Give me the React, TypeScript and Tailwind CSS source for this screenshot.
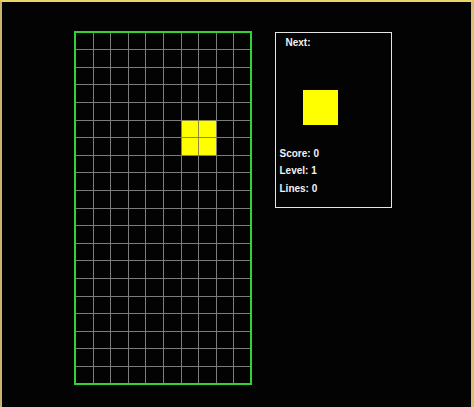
const COLS = 10;
const ROWS = 20;

// the falling O piece: rows 5-6, cols 6-7
const filled = new Set(["5-6", "5-7", "6-6", "6-7"]);

function Board() {
  const cells = [];
  for (let r = 0; r < ROWS; r++) {
    for (let c = 0; c < COLS; c++) {
      const on = filled.has(`${r}-${c}`);
      cells.push(
        <div
          key={`${r}-${c}`}
          className={
            on
              ? "border-l border-t border-[#8c8a3a] bg-[#ffff00]"
              : "border-l border-t border-[#7c7c7c]"
          }
        />
      );
    }
  }
  return (
    <div className="grid h-[352px] w-[176px] shrink-0 grid-cols-10 grid-rows-20 outline-[2.5px] -outline-offset-[1px] outline-[#33d233] outline-solid">
      {cells}
    </div>
  );
}

function SidePanel() {
  return (
    <div className="flex h-[176px] w-[117px] flex-col border-[1.5px] border-[#e4e4e4] font-['Liberation_Sans',Arial,sans-serif] text-[10px] font-bold text-[#f2f2f2]">
      <p className="pl-[9.5px] pt-[3.5px] leading-[12px]">Next:</p>
      <div className="ml-[27px] mt-[41.5px] h-[35.2px] w-[35.2px] bg-[#ffff00]" />
      <div className="mt-[19.5px] pl-[3.5px] leading-[17.4px]">
        <p>Score: 0</p>
        <p>Level: 1</p>
        <p>Lines: 0</p>
      </div>
    </div>
  );
}

export default function App() {
  return (
    <div className="h-[407px] w-[474px] overflow-hidden border-l-2 border-r-[3px] border-t-2 border-l-[#cbb56e] border-r-[#d8c070] border-t-[#ecd46a] bg-[#030303]">
      <div className="flex items-start gap-[24px] pl-[73px] pt-[29.5px]">
        <Board />
        <div className="pt-[0.5px]">
          <SidePanel />
        </div>
      </div>
    </div>
  );
}
